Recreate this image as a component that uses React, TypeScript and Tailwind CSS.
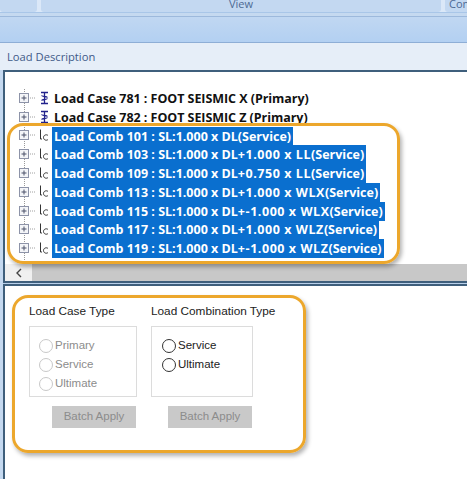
// App.tsx
const FONT_TREE = "'Open Sans', 'Noto Sans', sans-serif"
const FONT_FORM = "'Liberation Sans', Arial, sans-serif"

const CASES = ['Load Case 781 : FOOT SEISMIC X (Primary)', 'Load Case 782 : FOOT SEISMIC Z (Primary)']
const COMBS = [
  'Load Comb 101 : SL:1.000 x DL(Service)',
  'Load Comb 103 : SL:1.000 x DL+1.000 x LL(Service)',
  'Load Comb 109 : SL:1.000 x DL+0.750 x LL(Service)',
  'Load Comb 113 : SL:1.000 x DL+1.000 x WLX(Service)',
  'Load Comb 115 : SL:1.000 x DL+-1.000 x WLX(Service)',
  'Load Comb 117 : SL:1.000 x DL+1.000 x WLZ(Service)',
  'Load Comb 119 : SL:1.000 x DL+-1.000 x WLZ(Service)',
]

function Expander() {
  return (
    <svg width="19" height="11" viewBox="0 0 19 11" className="shrink-0">
      <rect x="0.5" y="0.5" width="9" height="9" fill="#f4f5f8" stroke="#8d93a8" />
      <path d="M2.5 5H7.5M5 2.5V7.5" stroke="#4a5068" />
      <path d="M11 5H17" stroke="#a0a0a0" strokeDasharray="1 1" />
    </svg>
  )
}

function CaseIcon() {
  return (
    <svg width="12" height="14" viewBox="0 0 12 14" className="shrink-0 mr-[2px]">
      <path d="M3 1.5H10M6.5 1.5V12.5M3 12.5H10M3.5 4.5C4.5 6 8.5 5 9.5 6.5M3.5 9.5C4.5 8 8.5 9 9.5 7.5" fill="none" stroke="#22228c" strokeWidth="1.3" />
    </svg>
  )
}

function CombIcon() {
  return (
    <svg width="12" height="14" viewBox="0 0 12 14" className="shrink-0 mr-[2px]">
      <path d="M2.5 0.5V10H4" fill="none" stroke="#333" strokeWidth="1" />
      <path d="M10 6.5C8.5 5 5.5 6 5.5 8.5C5.5 11 8.5 12 10 10.5" fill="none" stroke="#333" strokeWidth="1" />
    </svg>
  )
}

function TreeRow({ label, selected }: { label: string; selected?: boolean }) {
  const plus = label.indexOf('+')
  const end = label.lastIndexOf('(')
  return (
    <div className="flex items-center h-[18.8px]">
      <Expander />
      {selected ? <CombIcon /> : <CaseIcon />}
      <span
        className={`h-[19px] px-[2px] text-[12.5px] leading-[19px] font-bold whitespace-nowrap ${
          selected ? 'bg-[#0a6fcf] text-white' : 'text-[#111] tracking-[-0.05px]'
        }`}
      >
        {plus < 0 ? (
          label
        ) : (
          <>
            {label.slice(0, plus)}
            <span className="tracking-[0.55px]">{label.slice(plus, end)}</span>
            {label.slice(end)}
          </>
        )}
      </span>
    </div>
  )
}

function Radio({ label, disabled }: { label: string; disabled?: boolean }) {
  return (
    <div className="flex items-center h-[19px] gap-[2px]">
      <span className={`w-[14px] h-[14px] rounded-full border bg-white ${disabled ? 'border-[#c8c8c8]' : 'border-[#333]'}`} />
      <span className={`text-[11.5px] ${disabled ? 'text-[#8c8c8c]' : 'text-[#222]'}`}>{label}</span>
    </div>
  )
}

function TypeGroup({ title, options, disabled, boxClass, buttonLeft }: { title: string; options: string[]; disabled?: boolean; boxClass: string; buttonLeft: string }) {
  return (
    <div className="flex flex-col">
      <div className="text-[11.8px] leading-[14px] text-[#222] whitespace-nowrap">{title}</div>
      <div className={`mt-[8px] h-[71px] border border-[#dcdcdc] pt-[9px] ${boxClass}`}>
        {options.map((o) => (
          <Radio key={o} label={o} disabled={disabled} />
        ))}
      </div>
      <button
        type="button"
        className={`mt-[9px] w-[84px] h-[22px] bg-[#c9c9c9] text-[11.5px] text-[#8c8c8c] ${buttonLeft}`}
      >
        Batch Apply
      </button>
    </div>
  )
}

export default function App() {
  return (
    <div className="relative w-[467px] h-[479px] overflow-hidden bg-[#c5d9f0]" style={{ fontFamily: FONT_TREE }}>
      {/* Ribbon group labels */}
      <div className="flex h-[13px] gap-[4px] bg-[#dbe8f8] border-b border-[#a9c6e8]">
        <div className="w-[37px] bg-[#c3d8f1] rounded-b-[3px]" />
        <div className="w-[400px] bg-[#c3d8f1] rounded-b-[3px] text-center text-[11px] leading-[8px] text-[#4d6a94]">View</div>
        <div className="flex-1 bg-[#c3d8f1] rounded-bl-[3px] pl-[4px] text-[11px] leading-[8px] text-[#4d6a94] overflow-hidden">Con</div>
      </div>
      <div className="h-[4px] bg-[#c5d9f0] border-b border-[#9db9dc]" />
      <div className="h-[26px] bg-gradient-to-b from-[#c0d7f2] to-[#b3d0f2] border-b border-[#8eaed6]" />

      {/* Panel title */}
      <div className="h-[27px] pl-[7px] bg-[#e6eef8] text-[11.2px] leading-[27px] text-[#3f5a88]">Load Description</div>

      {/* Tree */}
      <div className="ml-[3px] h-[211px] flex flex-col bg-white border-t-2 border-l-2 border-[#3f5f7c]">
        <div className="relative flex-1 pt-[17px] pl-[14px] overflow-hidden">
          <div className="absolute left-[19px] top-[17px] bottom-0 border-l border-dotted border-[#999]" />
          <div className="relative">
            {CASES.map((c) => (
              <TreeRow key={c} label={c} />
            ))}
            {COMBS.map((c) => (
              <TreeRow key={c} label={c} selected />
            ))}
          </div>
        </div>
        <div className="h-[17px] flex bg-[#c8c8c8]">
          <div className="w-[27px] bg-[#f0f0f0] flex items-center justify-center">
            <svg width="8" height="10" viewBox="0 0 8 10">
              <path d="M6 1L2 5L6 9" fill="none" stroke="#444" strokeWidth="1.4" />
            </svg>
          </div>
        </div>
      </div>

      {/* Splitter */}
      <div className="ml-[3px] h-[5px] bg-[#b9d0ea] border-y-2 border-[#3f5f7c]" />

      {/* Type panel */}
      <div className="ml-[3px] h-[195px] bg-white border-l-2 border-[#3f5f7c] pl-[24px] pt-[18px] flex gap-[14px]" style={{ fontFamily: FONT_FORM }}>
        <TypeGroup title="Load Case Type" options={['Primary', 'Service', 'Ultimate']} disabled boxClass="w-[108px] pl-[9px]" buttonLeft="ml-[23px]" />
        <TypeGroup title="Load Combination Type" options={['Service', 'Ultimate']} boxClass="w-[102px] pl-[10px]" buttonLeft="ml-[17px]" />
      </div>

      {/* Callouts */}
      <div className="absolute left-[7px] top-[123px] w-[393px] h-[141px] rounded-[16px] border-[3px] border-[#eca72c] shadow-[2px_3px_4px_rgba(0,0,0,0.3)]" />
      <div className="absolute left-[12px] top-[295px] w-[294px] h-[158px] rounded-[16px] border-[3px] border-[#eca72c] shadow-[2px_3px_4px_rgba(0,0,0,0.3)]" />
    </div>
  )
}
